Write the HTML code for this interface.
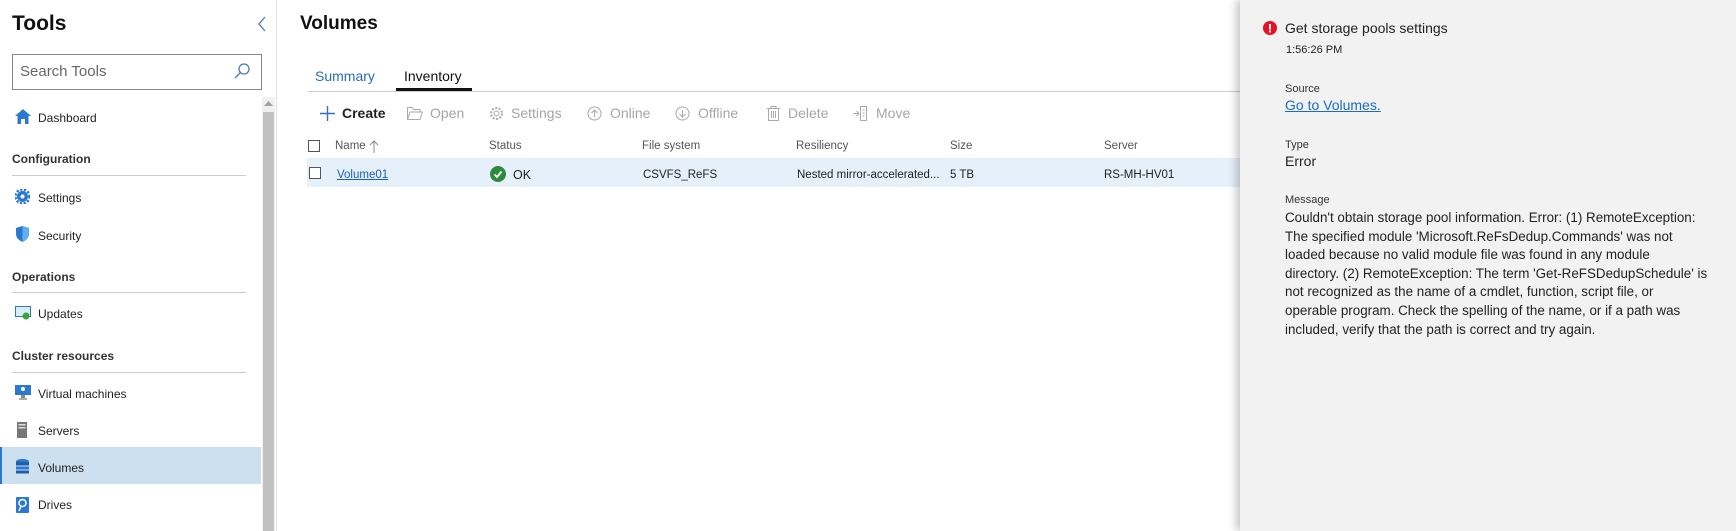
<!DOCTYPE html>
<html><head><meta charset="utf-8"><style>
*{margin:0;padding:0;box-sizing:border-box}
body{width:1736px;height:531px;overflow:hidden;background:#fff;font-family:"Liberation Sans",sans-serif;color:#222;position:relative}
.a{position:absolute;white-space:nowrap}
.nav{font-size:12px;color:#222}
.hdr{font-size:12px;font-weight:bold;color:#333}
.line{position:absolute;height:1px;background:#ccc}
.tb{font-size:14px;color:#a6a6a6}
.col{font-size:11.5px;color:#555}
.cell{font-size:11.5px;color:#222}
.cb{position:absolute;width:12px;height:12px;border:1px solid #555;background:#fff}
.icon{position:absolute}
</style></head><body>
<div class="a" style="left:12px;top:12px;font-size:21px;font-weight:bold;color:#111">Tools</div>
<svg class="icon" style="left:257px;top:16px" width="10" height="16"><path d="M8 1 L2 8 L8 15" stroke="#4a7ab8" stroke-width="1.3" fill="none"/></svg>
<div style="position:absolute;left:12px;top:54px;width:250px;height:36px;border:1px solid #888"></div>
<div class="a" style="left:20px;top:63px;font-size:15px;color:#666">Search Tools</div>
<svg class="icon" style="left:233px;top:62px" width="18" height="18"><circle cx="11" cy="7" r="5" stroke="#4a7ab8" stroke-width="1.3" fill="none"/><path d="M7.5 10.5 L2 16" stroke="#4a7ab8" stroke-width="1.3"/></svg>
<div style="position:absolute;left:262px;top:97px;width:13px;height:434px;background:#f0f0f0"></div>
<div style="position:absolute;left:263px;top:112px;width:11px;height:419px;background:#c1c1c1"></div>
<svg class="icon" style="left:264px;top:101px" width="9" height="6"><path d="M0 5 L4.5 0 L9 5Z" fill="#a0a0a0"/></svg>
<div style="position:absolute;left:276px;top:0;width:1px;height:531px;background:#e0e0e0"></div>

<svg class="icon" style="left:15px;top:109px" width="16" height="15"><path d="M8 0 L16 7 L13.5 7 L13.5 15 L10 15 L10 10 L6 10 L6 15 L2.5 15 L2.5 7 L0 7Z" fill="#2b78d0"/></svg>
<div class="a nav" style="left:38px;top:111px">Dashboard</div>
<div class="a hdr" style="left:12px;top:152px">Configuration</div>
<div class="line" style="left:12px;top:175px;width:234px"></div>
<svg class="icon" style="left:15px;top:189px" width="15" height="15"><circle cx="7.5" cy="7.5" r="5.5" fill="#2b78d0"/><circle cx="7.5" cy="7.5" r="7" fill="none" stroke="#2b78d0" stroke-width="2.5" stroke-dasharray="2.2 1.6"/><circle cx="7.5" cy="7.5" r="2" fill="#fff"/></svg>
<div class="a nav" style="left:38px;top:191px">Settings</div>
<svg class="icon" style="left:16px;top:226px" width="13" height="16"><path d="M6.5 0 L13 2 L13 8 Q13 13 6.5 16 Q0 13 0 8 L0 2Z" fill="#2b78d0"/><path d="M6.5 0 L13 2 L13 8 Q13 13 6.5 16Z" fill="#5fb0f0"/></svg>
<div class="a nav" style="left:38px;top:229px">Security</div>
<div class="a hdr" style="left:12px;top:270px">Operations</div>
<div class="line" style="left:12px;top:292px;width:234px"></div>
<svg class="icon" style="left:15px;top:306px" width="16" height="14"><rect x="0.5" y="0.5" width="15" height="10" fill="#d8ecfa" stroke="#2b78d0"/><circle cx="11" cy="10" r="3.5" fill="#3aa33a"/></svg>
<div class="a nav" style="left:38px;top:307px">Updates</div>
<div class="a hdr" style="left:12px;top:349px">Cluster resources</div>
<div class="line" style="left:12px;top:372px;width:234px"></div>
<svg class="icon" style="left:15px;top:385px" width="16" height="15"><rect x="0" y="0" width="16" height="10" fill="#2b78d0"/><rect x="6" y="10" width="4" height="3" fill="#888"/><rect x="4" y="13" width="8" height="2" fill="#aaa"/><circle cx="8" cy="4" r="2" fill="#fff"/></svg>
<div class="a nav" style="left:38px;top:387px">Virtual machines</div>
<svg class="icon" style="left:17px;top:422px" width="10" height="16"><rect x="0" y="0" width="10" height="16" fill="#777"/><rect x="1.5" y="2" width="7" height="1.5" fill="#ddd"/><rect x="1.5" y="5" width="7" height="1.5" fill="#ddd"/></svg>
<div class="a nav" style="left:38px;top:424px">Servers</div>
<div style="position:absolute;left:0;top:447px;width:261px;height:37px;background:#cce0f0;border-left:2px solid #2b78d0"></div>
<svg class="icon" style="left:16px;top:459px" width="13" height="15"><ellipse cx="6.5" cy="2.5" rx="6.5" ry="2.5" fill="#2b78d0"/><rect x="0" y="3" width="13" height="3.5" fill="#1f5fa8"/><rect x="0" y="7.5" width="13" height="3" fill="#2b78d0"/><rect x="0" y="11.5" width="13" height="3" fill="#1f5fa8"/></svg>
<div class="a nav" style="left:38px;top:461px">Volumes</div>
<svg class="icon" style="left:16px;top:497px" width="13" height="16"><rect x="0" y="0" width="13" height="16" rx="1" fill="#2b78d0"/><circle cx="6.5" cy="6" r="3.5" fill="none" stroke="#fff" stroke-width="1.5"/><path d="M5 9 L3 14" stroke="#fff" stroke-width="1.5"/></svg>
<div class="a nav" style="left:38px;top:498px">Drives</div>

<div class="a" style="left:300px;top:13px;font-size:19px;font-weight:bold;color:#111">Volumes</div>
<div class="a" style="left:315px;top:68px;font-size:14px;color:#2b6cb8">Summary</div>
<div class="a" style="left:404px;top:68px;font-size:14px;color:#111">Inventory</div>
<div style="position:absolute;left:396px;top:88px;width:76px;height:3px;background:#111"></div>
<div class="line" style="left:308px;top:91px;width:932px;background:#ccc"></div>

<svg class="icon" style="left:320px;top:106px" width="15" height="15"><path d="M7.5 0 V15 M0 7.5 H15" stroke="#3b6fc4" stroke-width="1.4"/></svg>
<div class="a" style="left:342px;top:105px;font-size:14px;font-weight:bold;color:#222">Create</div>
<svg class="icon" style="left:407px;top:107px" width="16" height="13"><path d="M0.5 12.5 V0.5 H5 L6.5 2.5 H13 V5 M0.5 12.5 L3 5 H15.5 L13 12.5Z" stroke="#aaa" fill="none"/></svg>
<div class="a tb" style="left:430px;top:105px">Open</div>
<svg class="icon" style="left:489px;top:106px" width="15" height="15"><circle cx="7.5" cy="7.5" r="2.5" stroke="#aaa" fill="none"/><circle cx="7.5" cy="7.5" r="5.5" stroke="#aaa" fill="none" stroke-width="2" stroke-dasharray="2 1.5"/></svg>
<div class="a tb" style="left:511px;top:105px">Settings</div>
<svg class="icon" style="left:587px;top:106px" width="15" height="15"><circle cx="7.5" cy="7.5" r="6.5" stroke="#aaa" fill="none"/><path d="M7.5 11 V4 M4.5 7 L7.5 4 L10.5 7" stroke="#aaa" fill="none"/></svg>
<div class="a tb" style="left:610px;top:105px">Online</div>
<svg class="icon" style="left:675px;top:106px" width="15" height="15"><circle cx="7.5" cy="7.5" r="6.5" stroke="#aaa" fill="none"/><path d="M7.5 4 V11 M4.5 8 L7.5 11 L10.5 8" stroke="#aaa" fill="none"/></svg>
<div class="a tb" style="left:698px;top:105px">Offline</div>
<svg class="icon" style="left:767px;top:106px" width="13" height="15"><path d="M0 2.5 H13 M4 2.5 V0.5 H9 V2.5 M1.5 2.5 V14.5 H11.5 V2.5 M4.5 5 V12 M6.5 5 V12 M8.5 5 V12" stroke="#aaa" fill="none"/></svg>
<div class="a tb" style="left:788px;top:105px">Delete</div>
<svg class="icon" style="left:853px;top:106px" width="15" height="15"><path d="M7.5 0.5 H13.5 V14.5 H7.5Z M0 7.5 H6 M3.5 5 L6 7.5 L3.5 10 M9.5 4 H11.5 M9.5 7 H11.5 M9.5 10 H11.5" stroke="#aaa" fill="none"/></svg>
<div class="a tb" style="left:876px;top:105px">Move</div>

<div class="cb" style="left:308px;top:140px"></div>
<div class="a col" style="left:335px;top:140px">Name</div>
<svg class="icon" style="left:369px;top:140px" width="10" height="13"><path d="M5 13 V1 M1 5 L5 1 L9 5" stroke="#888" fill="none"/></svg>
<div class="a col" style="left:489px;top:140px">Status</div>
<div class="a col" style="left:642px;top:140px">File system</div>
<div class="a col" style="left:796px;top:140px">Resiliency</div>
<div class="a col" style="left:950px;top:140px">Size</div>
<div class="a col" style="left:1104px;top:140px">Server</div>

<div style="position:absolute;left:307px;top:158px;width:933px;height:29px;background:#e6f0fa"></div>
<div class="cb" style="left:309px;top:167px"></div>
<div class="a cell" style="left:337px;top:169px;color:#1a5fb4;text-decoration:underline">Volume01</div>
<svg class="icon" style="left:490px;top:166px" width="16" height="16"><circle cx="8" cy="8" r="8" fill="#2e8b3d"/><path d="M4.5 8.5 L7 11 L11.5 5.5" stroke="#fff" stroke-width="1.8" fill="none"/></svg>
<div class="a cell" style="left:513px;top:168px;font-size:12.5px">OK</div>
<div class="a cell" style="left:643px;top:169px">CSVFS_ReFS</div>
<div class="a cell" style="left:797px;top:169px">Nested mirror-accelerated...</div>
<div class="a cell" style="left:950px;top:169px">5 TB</div>
<div class="a cell" style="left:1104px;top:169px">RS-MH-HV01</div>

<div style="position:absolute;left:1240px;top:0;width:496px;height:531px;background:#f2f2f2;box-shadow:-4px 0 8px rgba(0,0,0,0.22)"></div>
<svg class="icon" style="left:1263px;top:21px" width="14" height="14"><circle cx="7" cy="7" r="7" fill="#e81123"/><rect x="6" y="3" width="2" height="5.5" fill="#fff"/><rect x="6" y="9.5" width="2" height="2" fill="#fff"/></svg>
<div class="a" style="left:1285px;top:20px;font-size:14px;color:#222">Get storage pools settings</div>
<div class="a" style="left:1286px;top:44px;font-size:11px;color:#222">1:56:26 PM</div>
<div class="a" style="left:1285px;top:83px;font-size:11px;color:#333">Source</div>
<div class="a" style="left:1285px;top:97px;font-size:14px;color:#1a6cc4;text-decoration:underline">Go to Volumes.</div>
<div class="a" style="left:1285px;top:139px;font-size:11px;color:#333">Type</div>
<div class="a" style="left:1285px;top:153px;font-size:14px;color:#222">Error</div>
<div class="a" style="left:1285px;top:194px;font-size:11px;color:#333">Message</div>
<div class="a" style="left:1285px;top:209px;font-size:13.4px;line-height:18.6px;color:#222">Couldn't obtain storage pool information. Error: (1) RemoteException:<br>The specified module 'Microsoft.ReFsDedup.Commands' was not<br>loaded because no valid module file was found in any module<br>directory. (2) RemoteException: The term 'Get-ReFSDedupSchedule' is<br>not recognized as the name of a cmdlet, function, script file, or<br>operable program. Check the spelling of the name, or if a path was<br>included, verify that the path is correct and try again.</div>
</body></html>
